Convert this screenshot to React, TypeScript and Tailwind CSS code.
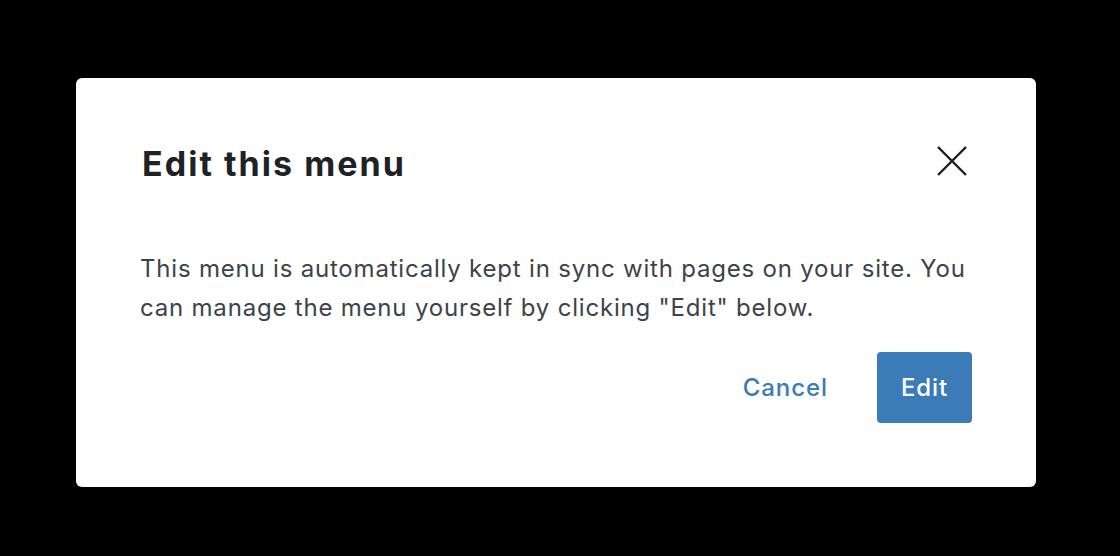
import React from 'react';

const CloseIcon: React.FC = () => (
  <svg width="32" height="32" viewBox="0 0 32 32" fill="none" aria-hidden="true">
    <path d="M2 2L30 30M30 2L2 30" stroke="#1e1e1e" strokeWidth="2.4" />
  </svg>
);

export default function App() {
  return (
    <div
      className="min-h-[556px] w-full bg-black pl-[76px] pt-[78px]"
      style={{ fontFamily: 'Inter, "Noto Sans", sans-serif' }}
    >
      <div className="w-[960px] rounded-md bg-white px-16 pb-16 pt-[66px]">
        {/* Header */}
        <div className="flex items-start justify-between">
          <h1 className="ml-[2px] text-[34px] font-bold leading-[40px] tracking-[0.06em] text-[#1e2125]">
            Edit this menu
          </h1>
          <button className="mr-1 mt-[1px]" aria-label="Close dialog">
            <CloseIcon />
          </button>
        </div>

        {/* Body */}
        <p className="mt-[65px] text-[24px] leading-[39px] tracking-[0.8px] text-[#3c434a]">
          This menu is automatically kept in sync with pages on your site. You can manage the menu yourself by
          clicking "Edit" below.
        </p>

        {/* Actions */}
        <div className="mt-[25px] flex items-center justify-end gap-[49px]">
          <button className="text-[24px] font-medium tracking-[0.9px] text-[#3a7bb8]">Cancel</button>
          <button className="h-[71px] rounded-[4px] bg-[#3a7bb8] px-6 text-[24px] font-medium tracking-[0.9px] text-white">
            Edit
          </button>
        </div>
      </div>
    </div>
  );
}
